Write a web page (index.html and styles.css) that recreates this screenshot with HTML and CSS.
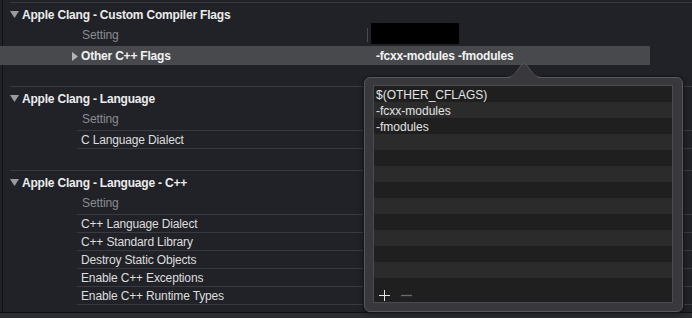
FILE: index.html
```html
<!DOCTYPE html>
<html lang="en">
<head>
    <meta charset="UTF-8">
    <title>Build Settings</title>
    <link rel="stylesheet" href="styles.css">
</head>
<body>
    <div class="pane">
        <section class="group">
            <div class="group-title">
                <svg class="disclosure-down" width="9" height="7" viewBox="0 0 9 7"><polygon points="0,0 9,0 4.5,7"/></svg>
                Apple Clang - Custom Compiler Flags
            </div>
            <div class="setting-head">
                <span class="setting-label">Setting</span>
                <span class="col-divider"></span>
                <span class="redacted"></span>
            </div>
            <div class="row row-selected">
                <span class="row-label"><svg class="disclosure-right" width="6" height="9" viewBox="0 0 6 9"><polygon points="0,0 6,4.5 0,9"/></svg>Other C++ Flags</span>
                <span class="row-value">-fcxx-modules -fmodules</span>
            </div>
        </section>

        <section class="group">
            <div class="group-title">
                <svg class="disclosure-down" width="9" height="7" viewBox="0 0 9 7"><polygon points="0,0 9,0 4.5,7"/></svg>
                Apple Clang - Language
            </div>
            <div class="setting-head">
                <span class="setting-label">Setting</span>
            </div>
            <div class="row"><span class="row-label">C Language Dialect</span></div>
        </section>

        <section class="group">
            <div class="group-title">
                <svg class="disclosure-down" width="9" height="7" viewBox="0 0 9 7"><polygon points="0,0 9,0 4.5,7"/></svg>
                Apple Clang - Language - C++
            </div>
            <div class="setting-head">
                <span class="setting-label">Setting</span>
            </div>
            <div class="row"><span class="row-label">C++ Language Dialect</span></div>
            <div class="row"><span class="row-label">C++ Standard Library</span></div>
            <div class="row"><span class="row-label">Destroy Static Objects</span></div>
            <div class="row"><span class="row-label">Enable C++ Exceptions</span></div>
            <div class="row"><span class="row-label">Enable C++ Runtime Types</span></div>
        </section>
    </div>
    <div class="status-bar"></div>

    <!-- value editor popover -->
    <div class="popover">
        <svg class="popover-arrow" width="38" height="16" viewBox="0 0 38 16">
            <path class="arrow-fill" d="M0 15.5 C6 15.5 9 12.5 12 8.5 L16.5 2.5 Q19 -0.5 21.5 2.5 L26 8.5 C29 12.5 32 15.5 38 15.5 L38 16 L0 16 Z"/>
            <path class="arrow-line" d="M0 14.5 C6 14.5 9 12 12 8 L16.5 2 Q19 -1 21.5 2 L26 8 C29 12 32 14.5 38 14.5"/>
        </svg>
        <div class="flag-list">
            <div class="flag">$(OTHER_CFLAGS)</div>
            <div class="flag">-fcxx-modules</div>
            <div class="flag">-fmodules</div>
            <div class="flag"></div>
            <div class="flag"></div>
            <div class="flag"></div>
            <div class="flag"></div>
            <div class="flag"></div>
            <div class="flag"></div>
            <div class="flag"></div>
            <div class="flag"></div>
            <div class="flag"></div>
            <div class="list-footer">
                <svg class="btn-add" width="11" height="11" viewBox="0 0 11 11"><path d="M5.5 0 V11 M0 5.5 H11"/></svg>
                <svg class="btn-remove" width="11" height="11" viewBox="0 0 11 11"><path d="M0 5.5 H11"/></svg>
            </div>
        </div>
    </div>
</body>
</html>
```

FILE: styles.css
```css
body {
    margin: 0;
    background: #212228;
    font-family: 'Liberation Sans', Arial, sans-serif;
    font-size: 12px;
    overflow: hidden;
}
.pane {
    margin-left: 2px;
    border-left: 1px solid #0f1013;
    height: 312px;
    padding-top: 2px;
    box-sizing: border-box;
}
.group {
    padding-bottom: 21px;
}
.group-title {
    margin-left: 7px;
    border-top: 1px solid #3a3b40;
    height: 20px;
    padding-top: 2px;
    display: flex;
    align-items: center;
    gap: 3px;
    color: #ececec;
    font-weight: bold;
    letter-spacing: -0.2px;
}
.disclosure-down {
    fill: #9a9a9e;
    margin-top: -2px;
}
.disclosure-right {
    fill: #b4b4b6;
    margin-right: 3px;
}
.setting-head {
    display: flex;
    align-items: flex-start;
    height: 21px;
    padding-left: 79px;
}
.setting-label {
    width: 285px;
    line-height: 20px;
    color: #8b8b90;
    letter-spacing: -0.1px;
}
.col-divider {
    width: 1px;
    height: 14px;
    margin-top: 3px;
    background: #4a4b50;
}
.redacted {
    width: 88px;
    height: 21px;
    margin-top: -2px;
    margin-left: 3px;
    background: #000;
}
.row {
    display: grid;
    grid-template-columns: 295px 1fr;
    margin-left: 74px;
    padding-left: 4px;
    padding-top: 1px;
    border-top: 1px solid #3a3b40;
    height: 16px;
    line-height: 17px;
    color: #dedede;
    letter-spacing: -0.15px;
}
.row:last-child {
    border-bottom: 1px solid #3a3b40;
}
.row-label {
    display: flex;
    align-items: center;
}
.row-selected {
    grid-template-columns: 304px 1fr;
    margin-left: -3px;
    margin-right: 42px;
    padding-left: 72px;
    background: #48494c;
    border-color: #48494c;
    color: #f2f2f2;
    font-weight: bold;
    letter-spacing: -0.2px;
}
.row-selected:last-child {
    border-bottom-color: #48494c;
}
.status-bar {
    height: 6px;
    border-top: 1px solid #0e0f11;
    background: #2c2d31;
}
.popover {
    position: absolute;
    left: 364px;
    top: 77px;
    width: 319px;
    height: 235px;
    box-sizing: border-box;
    padding: 7px 9px 8px 8px;
    background: #39393d;
    border: 1px solid #58595d;
    border-radius: 6px;
    box-shadow: 0 0 0 1px #15161a, 0 2px 6px rgba(0, 0, 0, 0.45);
}
.popover-arrow {
    position: absolute;
    left: 140px;
    top: -15px;
}
.arrow-fill {
    fill: #39393d;
}
.arrow-line {
    fill: none;
    stroke: #58595d;
    stroke-width: 1;
}
.flag-list {
    height: 218px;
    box-sizing: border-box;
    border: 1px solid #4b4b4e;
    background: #1f1f1f;
}
.flag {
    height: 16px;
    line-height: 18px;
    overflow: hidden;
    padding-left: 2px;
    color: #e4e4e4;
    background: #1f1f1f;
}
.flag:nth-child(even) {
    background: #2b2b2b;
}
.list-footer {
    display: flex;
    gap: 11px;
    padding: 12px 0 0 5px;
}
.btn-add path {
    stroke: #e6e6e6;
    stroke-width: 1;
}
.btn-remove path {
    stroke: #6c6c6f;
    stroke-width: 1.3;
}
```
